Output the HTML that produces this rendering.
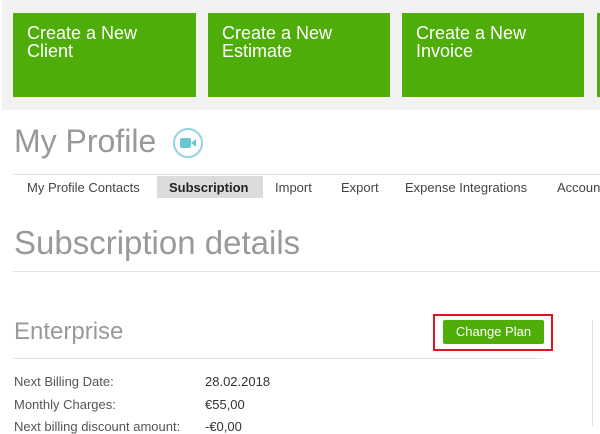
<!DOCTYPE html>
<html><head><style>
body{margin:0;width:600px;height:426px;overflow:hidden;background:#fff;font-family:"Liberation Sans",sans-serif;position:relative}
.band{position:absolute;left:2px;top:0;width:598px;height:110px;background:#f2f2f2}
.tile{position:absolute;top:13px;height:84px;width:183px;background:#4fad0a;color:#fff;font-size:18px;line-height:18px;box-sizing:border-box;padding:11px 14px}
.a{position:absolute;white-space:nowrap}
</style></head><body>
<div class="band"></div>
<div class="tile" style="left:13px">Create a New<br>Client</div>
<div class="tile" style="left:208px;width:182px">Create a New<br>Estimate</div>
<div class="tile" style="left:402px;width:182px">Create a New<br>Invoice</div>
<div class="tile" style="left:597px"></div>
<div class="a" style="left:14px;top:123px;font-size:32px;color:#999">My Profile</div>
<svg class="a" style="left:172px;top:127px" width="32" height="32"><circle cx="16" cy="16" r="14" fill="#fff" stroke="#8fd3dd" stroke-width="2"/><rect x="8" y="11" width="11" height="10" rx="2" fill="#6cc5d3"/><path d="M19 16 L24 12 V20Z" fill="#6cc5d3"/></svg>
<div class="a" style="left:13px;top:174px;width:587px;height:1px;background:#e2e2e2"></div>
<div class="a" style="left:157px;top:176px;width:106px;height:22px;background:#dcdcdc"></div>
<div class="a" style="top:180px;font-size:13px;color:#444;left:27px">My Profile Contacts</div>
<div class="a" style="top:180px;font-size:13px;color:#222;left:169px;font-weight:bold">Subscription</div>
<div class="a" style="top:180px;font-size:13px;color:#444;left:275px">Import</div>
<div class="a" style="top:180px;font-size:13px;color:#444;left:341px">Export</div>
<div class="a" style="top:180px;font-size:13px;color:#444;left:405px">Expense Integrations</div>
<div class="a" style="top:180px;font-size:13px;color:#444;left:557px">Accounts</div>
<div class="a" style="left:14px;top:224px;font-size:33px;color:#999">Subscription details</div>
<div class="a" style="left:13px;top:271px;width:587px;height:1px;background:#e2e2e2"></div>
<div class="a" style="left:14px;top:318px;font-size:24px;color:#999">Enterprise</div>
<div class="a" style="left:13px;top:358px;width:530px;height:1px;background:#e2e2e2"></div>
<div class="a" style="left:433px;top:314px;width:116px;height:33px;border:2px solid #e0141c"></div>
<div class="a" style="left:443px;top:320px;width:101px;height:24px;background:#4fad0a;border-radius:2px;color:#fff;font-size:13px;line-height:24px;text-align:center">Change Plan</div>
<div class="a" style="left:592px;top:320px;width:1px;height:106px;background:#e2e2e2"></div>
<div class="a" style="left:14px;top:374px;font-size:13px;color:#555">Next Billing Date:</div>
<div class="a" style="left:205px;top:374px;font-size:13px;color:#333">28.02.2018</div>
<div class="a" style="left:14px;top:397px;font-size:13px;color:#555">Monthly Charges:</div>
<div class="a" style="left:205px;top:397px;font-size:13px;color:#333">€55,00</div>
<div class="a" style="left:14px;top:419px;font-size:13px;color:#555">Next billing discount amount:</div>
<div class="a" style="left:205px;top:419px;font-size:13px;color:#333">-€0,00</div>
</body></html>
